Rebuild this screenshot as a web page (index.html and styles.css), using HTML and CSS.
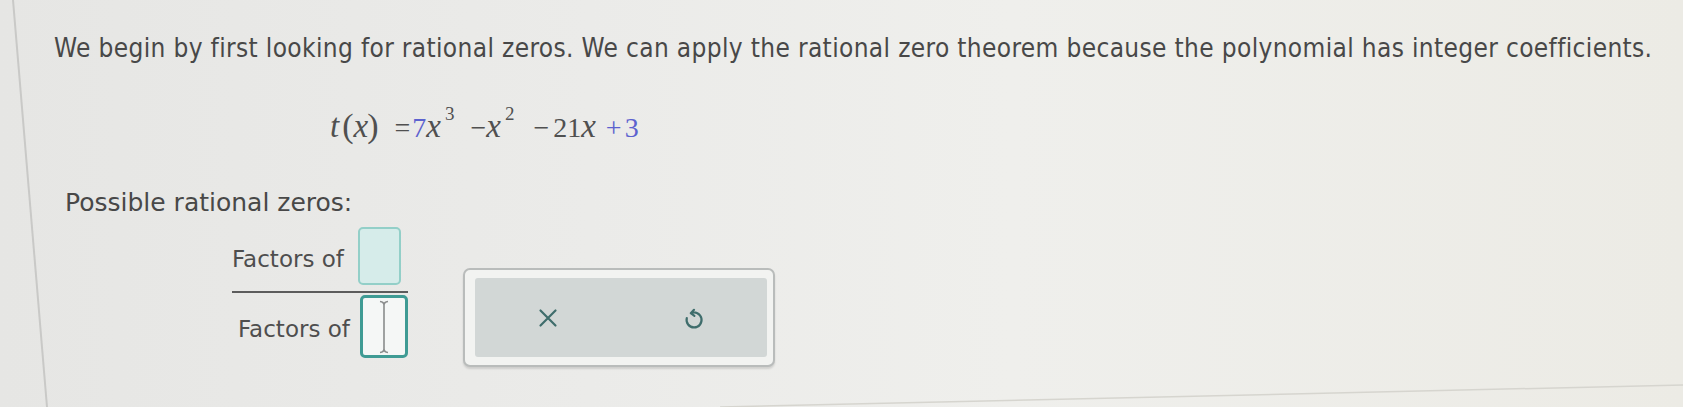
FILE: index.html
```html
<!DOCTYPE html>
<html lang="en">
<head>
<meta charset="utf-8">
<title>Rational zeros</title>
<link rel="stylesheet" href="styles.css">
</head>
<body>
<div class="screen">
  <svg class="edge-lines" width="1683" height="407" viewBox="0 0 1683 407" aria-hidden="true">
    <line x1="13" y1="0" x2="47" y2="407" class="edge-left"/>
    <line x1="720" y1="407" x2="1683" y2="385" class="edge-bottom"/>
  </svg>
  <div class="content">
    <p class="intro">We begin by first looking for rational zeros. We can apply the rational zero theorem because the polynomial has integer coefficients.</p>
    <div class="equation"><span class="it">t</span><span class="paren m3">(</span><span class="it">x</span><span class="paren mn1">)</span><span class="m16">=</span><span class="m2 blue">7</span><span class="it">x</span><span class="sup m4">3</span><span class="m16">−</span><span class="it">x</span><span class="sup m4">2</span><span class="m19">−</span><span class="m4">21</span><span class="it">x</span><span class="m10 blue">+</span><span class="m3 blue">3</span></div>
    <p class="label">Possible rational zeros:</p>
    <div class="answer-row">
      <div class="fraction">
        <div class="numer">
          <span class="factors">Factors of</span>
          <span class="slot slot-filled"></span>
        </div>
        <div class="frac-bar"></div>
        <div class="denom">
          <span class="factors">Factors of</span>
          <span class="slot slot-active">
            <svg class="ibeam" width="12" height="54" viewBox="0 0 12 54" aria-hidden="true">
              <path d="M2 1.5 Q6 2 6 5 Q6 2 10 1.5 M6 5 V49 M2 52.5 Q6 52 6 49 Q6 52 10 52.5" />
            </svg>
          </span>
        </div>
      </div>
      <div class="tools">
        <div class="tools-inner">
          <button class="tool" type="button" aria-label="Clear">
            <svg width="24" height="24" viewBox="0 0 24 24"><path d="M4.5 4.5 L19.5 19.5 M19.5 4.5 L4.5 19.5"/></svg>
          </button>
          <button class="tool" type="button" aria-label="Undo">
            <svg width="24" height="28" viewBox="0 0 24 28"><path d="M8.8 9.2 A7.5 7.5 0 1 1 4.8 14.1 M12 5.8 L8.8 9.2 L12.4 11.8"/></svg>
          </button>
        </div>
      </div>
    </div>
  </div>
</div>
</body>
</html>
```

FILE: styles.css
```css
html, body {
  margin: 0;
  padding: 0;
}

body {
  width: 1683px;
  height: 407px;
  overflow: hidden;
}

.screen {
  position: relative;
  width: 1683px;
  height: 407px;
  background: linear-gradient(90deg, #e6e6e4 0%, #ebebe9 35%, #efefec 60%, #ecebe5 100%);
  font-family: "DejaVu Sans", Verdana, sans-serif;
  color: #484848;
}

.edge-lines {
  position: absolute;
  left: 0;
  top: 0;
  pointer-events: none;
}

.edge-left {
  stroke: #c9c9c7;
  stroke-width: 2;
}

.edge-bottom {
  stroke: #d6d5cf;
  stroke-width: 1.5;
}

.content {
  padding-top: 33px;
}

.intro {
  margin: 0 0 0 54px;
  font-family: "DejaVu Sans Condensed", "DejaVu Sans", sans-serif;
  font-stretch: condensed;
  font-size: 26px;
  letter-spacing: 0.35px;
  line-height: 30px;
  white-space: nowrap;
}

.equation {
  margin: 43px 0 0 330px;
  height: 40px;
  line-height: 40px;
  font-family: "Liberation Serif", "Times New Roman", serif;
  font-size: 28px;
  color: #505050;
  white-space: nowrap;
}

.it {
  font-style: italic;
  font-size: 33px;
}

.paren {
  font-size: 34px;
}

.blue {
  color: #5c62cf;
}

.sup {
  font-size: 19px;
  line-height: 0;
  vertical-align: 17px;
}

.mn1 { margin-left: -1px; }
.m2 { margin-left: 2px; }
.m3 { margin-left: 3px; }
.m4 { margin-left: 4px; }
.m10 { margin-left: 10px; }
.m16 { margin-left: 16px; }
.m19 { margin-left: 19px; }

.label {
  margin: 42px 0 0 65px;
  font-size: 25px;
  line-height: 30px;
}

.answer-row {
  display: flex;
  align-items: flex-start;
  margin: 9px 0 0 232px;
}

.fraction {
  display: flex;
  flex-direction: column;
  width: 178px;
}

.factors {
  font-size: 23px;
  line-height: 28px;
  color: #4e4e4e;
  white-space: nowrap;
}

.numer {
  display: flex;
  align-items: flex-end;
  height: 58px;
}

.numer .factors {
  margin-bottom: 12px;
}

.slot {
  display: block;
  box-sizing: border-box;
  border-radius: 5px;
}

.slot-filled {
  width: 43px;
  height: 58px;
  margin-left: 14px;
  border: 2px solid #93cfc8;
  background: #d6ecea;
}

.frac-bar {
  width: 176px;
  height: 2px;
  margin-top: 6px;
  background: #5c5c5c;
}

.denom {
  display: flex;
  align-items: center;
  margin-top: 2px;
  padding-left: 6px;
}

.denom .factors {
  padding-top: 5px;
}

.slot-active {
  position: relative;
  display: flex;
  align-items: center;
  justify-content: center;
  width: 48px;
  height: 63px;
  margin-left: 10px;
  border: 3px solid #3f9b94;
  background: #f5f7f6;
}

.ibeam path {
  fill: none;
  stroke: #8a8c8c;
  stroke-width: 1.6;
}

.tools {
  margin: 41px 0 0 53px;
  box-sizing: border-box;
  width: 312px;
  height: 99px;
  padding: 8px 6px 8px 10px;
  border: 2px solid #b9bcbb;
  border-radius: 7px;
  background: #f2f3f1;
  box-shadow: 0 2px 2px rgba(0, 0, 0, 0.12);
}

.tools-inner {
  display: grid;
  grid-template-columns: 1fr 1fr;
  height: 100%;
  border-radius: 3px;
  background: #d2d7d6;
}

.tool {
  display: flex;
  align-items: center;
  justify-content: center;
  padding: 0;
  border: 0;
  background: transparent;
}

.tool svg path {
  fill: none;
  stroke: #3f6d6c;
  stroke-width: 2.2;
  stroke-linecap: round;
  stroke-linejoin: round;
}
```
